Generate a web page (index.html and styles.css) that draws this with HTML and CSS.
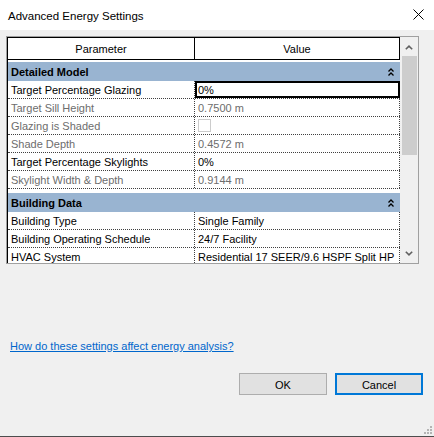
FILE: index.html
```html
<!DOCTYPE html>
<html>
<head>
<meta charset="utf-8">
<link rel="stylesheet" href="styles.css">
</head>
<body>
<div class="titlebar">
  <span class="title">Advanced Energy Settings</span>
  <svg class="close" width="11" height="11" viewBox="0 0 11 11"><path d="M0.5 0.5 L10.5 10.5 M10.5 0.5 L0.5 10.5" stroke="#000" stroke-width="1" fill="none"/></svg>
</div>
<div class="content">
  <div class="grid">
    <div class="table">
      <div class="hdr">
        <div class="hc name">Parameter</div>
        <div class="hc val">Value</div>
      </div>
      <div class="section first">
        <span>Detailed Model</span>
        <svg class="chev" width="6" height="8" viewBox="0 0 6 8"><path d="M0.5 3.5 L3 1 L5.5 3.5 M0.5 7.5 L3 5 L5.5 7.5" stroke="#000" stroke-width="1.3" fill="none"/></svg>
      </div>
      <div class="row">
        <div class="c name">Target Percentage Glazing</div>
        <div class="c val edit">0%</div>
      </div>
      <div class="row dis">
        <div class="c name">Target Sill Height</div>
        <div class="c val">0.7500 m</div>
      </div>
      <div class="row dis">
        <div class="c name">Glazing is Shaded</div>
        <div class="c val"><span class="check"></span></div>
      </div>
      <div class="row dis">
        <div class="c name">Shade Depth</div>
        <div class="c val">0.4572 m</div>
      </div>
      <div class="row">
        <div class="c name">Target Percentage Skylights</div>
        <div class="c val">0%</div>
      </div>
      <div class="row dis">
        <div class="c name">Skylight Width &amp; Depth</div>
        <div class="c val">0.9144 m</div>
      </div>
      <div class="section second">
        <span>Building Data</span>
        <svg class="chev" width="6" height="8" viewBox="0 0 6 8"><path d="M0.5 3.5 L3 1 L5.5 3.5 M0.5 7.5 L3 5 L5.5 7.5" stroke="#000" stroke-width="1.3" fill="none"/></svg>
      </div>
      <div class="row">
        <div class="c name">Building Type</div>
        <div class="c val">Single Family</div>
      </div>
      <div class="row">
        <div class="c name">Building Operating Schedule</div>
        <div class="c val">24/7 Facility</div>
      </div>
      <div class="row">
        <div class="c name">HVAC System</div>
        <div class="c val">Residential 17 SEER/9.6 HSPF Split HP</div>
      </div>
    </div>
    <div class="scroll">
      <div class="sbtn up"><svg width="8" height="5" viewBox="0 0 8 5"><path d="M0.8 4.3 L4 1.2 L7.2 4.3" stroke="#606060" stroke-width="1.6" fill="none"/></svg></div>
      <div class="thumb"></div>
      <div class="track"></div>
      <div class="sbtn down"><svg width="8" height="5" viewBox="0 0 8 5"><path d="M0.8 0.7 L4 3.8 L7.2 0.7" stroke="#606060" stroke-width="1.6" fill="none"/></svg></div>
    </div>
  </div>
  <a class="link" href="#">How do these settings affect energy analysis?</a>
  <div class="buttons">
    <div class="btn">OK</div>
    <div class="btn default">Cancel</div>
  </div>
</div>
<div class="grip">
  <span class="dot d1"></span><span class="dot d2"></span><span class="dot d3"></span>
  <span class="dot d4"></span><span class="dot d5"></span><span class="dot d6"></span>
</div>
<div class="edge"></div>
</body>
</html>
```
FILE: styles.css
```css
html, body {
  margin: 0;
  padding: 0;
}
body {
  width: 434px;
  height: 437px;
  background: #f0f0f0;
  font-family: "Liberation Sans", Arial, sans-serif;
  font-size: 11px;
  color: #000;
  overflow: hidden;
  position: relative;
}
.titlebar {
  height: 30px;
  background: #fff;
  display: flex;
  align-items: center;
  justify-content: space-between;
  padding: 0 10px 0 8px;
  box-sizing: border-box;
}
.title {
  font-size: 11.5px;
  padding-top: 1px;
}
.close {
  display: block;
  margin-top: -1px;
}
.content {
  padding: 6px 0 0 6px;
}
.grid {
  width: 413px;
  height: 228px;
  box-sizing: border-box;
  border: 1px solid #a0a0a0;
  display: flex;
  background: #fff;
}
.table {
  width: 393px;
  flex: none;
  box-sizing: border-box;
  border-left: 1px solid #000;
  border-top: 1px solid #000;
  overflow: hidden;
}
.hdr {
  display: flex;
  height: 22px;
  box-sizing: border-box;
  border-bottom: 1px solid #000;
}
.hc {
  display: flex;
  align-items: center;
  justify-content: center;
  border-right: 1px solid #000;
  box-sizing: border-box;
  padding-top: 1px;
}
.name {
  width: 187px;
  flex: none;
}
.val {
  width: 205px;
  flex: none;
}
.section {
  height: 19px;
  background: #99b4d1;
  display: flex;
  align-items: center;
  justify-content: space-between;
  padding: 1px 6px 0 3px;
  box-sizing: border-box;
  font-weight: bold;
}
.section.first {
  margin-top: 2px;
}
.section.second {
  margin-top: 4px;
}
.chev {
  display: block;
  margin-top: -1px;
}
.row {
  display: flex;
  height: 18px;
  box-sizing: border-box;
  border-bottom: 1px dotted #404040;
}
.c {
  display: flex;
  align-items: center;
  padding: 1px 0 0 3px;
  box-sizing: border-box;
  border-right: 1px dotted #404040;
  white-space: nowrap;
  overflow: hidden;
}
.row.dis .c {
  color: #6d6d6d;
}
.c.edit {
  border: 2px solid #000;
  padding-left: 1px;
}
.check {
  display: block;
  width: 13px;
  height: 13px;
  box-sizing: border-box;
  border: 1px solid #cccccc;
  background: #fff;
  margin-top: -1px;
}
.scroll {
  flex: 1;
  display: flex;
  flex-direction: column;
  background: #f0f0f0;
}
.sbtn {
  height: 19px;
  display: flex;
  align-items: center;
  justify-content: center;
  flex: none;
}
.sbtn.up {
  padding-top: 2px;
  box-sizing: border-box;
}
.sbtn svg {
  display: block;
}
.thumb {
  height: 99px;
  width: 15px;
  margin-left: 2px;
  background: #cdcdcd;
  flex: none;
}
.track {
  flex: 1;
}
.link {
  display: block;
  margin: 75px 0 0 4px;
  line-height: 15px;
  color: #0066cc;
  text-decoration: underline;
  width: max-content;
}
.buttons {
  display: flex;
  justify-content: flex-end;
  gap: 8px;
  padding-right: 11px;
  margin-top: 19px;
}
.btn {
  width: 88px;
  height: 22px;
  box-sizing: border-box;
  border: 1px solid #adadad;
  background: #e1e1e1;
  display: flex;
  align-items: center;
  justify-content: center;
  padding-top: 1px;
}
.btn.default {
  border: 2px solid #0078d7;
}
.grip {
  position: absolute;
  right: 0;
  bottom: 0;
  width: 14px;
  height: 14px;
}
.dot {
  position: absolute;
  width: 2px;
  height: 2px;
  background: #b4b4b4;
}
.d1 { left: 10px; top: 3px; }
.d2 { left: 7px; top: 6px; }
.d3 { left: 10px; top: 6px; }
.d4 { left: 4px; top: 9px; }
.d5 { left: 7px; top: 9px; }
.d6 { left: 10px; top: 9px; }
.edge {
  position: absolute;
  left: 0;
  bottom: 0;
  width: 434px;
  height: 1px;
  background: #4d4d4d;
}
```
